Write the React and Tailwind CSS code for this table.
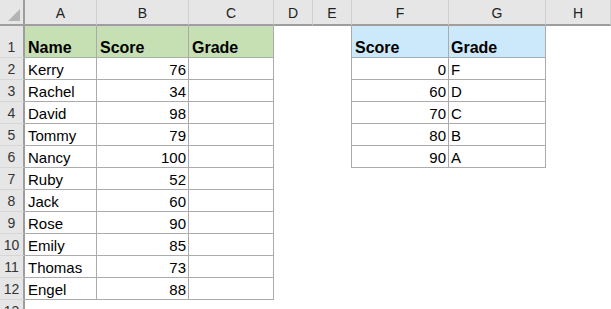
const cols = ['A', 'B', 'C', 'D', 'E', 'F', 'G', 'H']

const students = [
  ['Kerry', 76],
  ['Rachel', 34],
  ['David', 98],
  ['Tommy', 79],
  ['Nancy', 100],
  ['Ruby', 52],
  ['Jack', 60],
  ['Rose', 90],
  ['Emily', 85],
  ['Thomas', 73],
  ['Engel', 88],
]

const grades = [
  [0, 'F'],
  [60, 'D'],
  [70, 'C'],
  [80, 'B'],
  [90, 'A'],
]

const Cell = ({ className = '', children }) => (
  <div className={`box-border flex items-end overflow-hidden whitespace-nowrap pb-[1px] leading-[17px] ${className}`}>
    {children}
  </div>
)

const App = () => {
  const rows = Array.from({ length: 13 }, (_, i) => i + 1)

  return (
    <div
      className="w-[611px] h-[309px] overflow-hidden bg-white text-[15px] text-black"
      style={{ fontFamily: '"Liberation Sans", Arial, sans-serif' }}
    >
      <div className="grid grid-cols-[25px_72px_92px_85px_39px_39px_97px_97px_1fr] grid-rows-[26px_32px_repeat(12,22px)]">
        {/* Column headers */}
        <div className="relative box-border bg-[#e6e6e6] border-b-2 border-r-2 border-[#9e9e9e]">
          <div className="absolute right-[3px] bottom-[3px] w-0 h-0 border-l-[12px] border-l-transparent border-b-[12px] border-b-[#b4b4b4]" />
        </div>
        {cols.map((c) => (
          <div
            key={c}
            className="box-border flex items-center justify-center pt-[2px] bg-[#e6e6e6] border-b-2 border-b-[#9e9e9e] border-r border-r-[#d0d0d0] text-[14px] text-[#222]"
          >
            {c}
          </div>
        ))}

        {rows.map((r) => {
          const s = students[r - 2]
          const g = grades[r - 2]
          const inLeft = r <= 12
          const inRight = r <= 6
          const lb = 'border-[#ababab]'
          return [
            <div
              key={`h${r}`}
              className="box-border flex items-end justify-center pb-[1px] leading-[17px] bg-[#e6e6e6] border-r-2 border-r-[#9e9e9e] border-b border-b-[#d6d6d6] text-[14px] text-[#333]"
            >
              {r}
            </div>,
            // A
            <Cell
              key={`a${r}`}
              className={`pl-[3px] ${inLeft ? `border-r border-b ${lb}` : ''} ${r === 1 ? 'bg-[#c6e0b4] font-bold text-[16px]' : ''}`}
            >
              {r === 1 ? 'Name' : s ? s[0] : ''}
            </Cell>,
            // B
            <Cell
              key={`b${r}`}
              className={`${r === 1 ? 'pl-[3px] bg-[#c6e0b4] font-bold text-[16px]' : 'justify-end pr-[2px]'} ${inLeft ? `border-r border-b ${lb}` : ''}`}
            >
              {r === 1 ? 'Score' : s ? s[1] : ''}
            </Cell>,
            // C
            <Cell
              key={`c${r}`}
              className={`pl-[3px] ${inLeft ? `border-r border-b ${lb}` : ''} ${r === 1 ? 'bg-[#c6e0b4] font-bold text-[16px]' : ''}`}
            >
              {r === 1 ? 'Grade' : ''}
            </Cell>,
            <Cell key={`d${r}`} />,
            <Cell key={`e${r}`} className={inRight ? `border-r ${lb}` : ''} />,
            // F
            <Cell
              key={`f${r}`}
              className={`${r === 1 ? 'pl-[3px] bg-[#cce9fb] font-bold text-[16px]' : 'justify-end pr-[2px]'} ${inRight ? `border-r border-b ${lb}` : ''}`}
            >
              {r === 1 ? 'Score' : g ? g[0] : ''}
            </Cell>,
            // G
            <Cell
              key={`g${r}`}
              className={`pl-[2px] ${inRight ? `border-r border-b ${lb}` : ''} ${r === 1 ? 'bg-[#cce9fb] font-bold text-[16px]' : ''}`}
            >
              {r === 1 ? 'Grade' : g ? g[1] : ''}
            </Cell>,
            <Cell key={`hh${r}`} />,
          ]
        })}
      </div>
    </div>
  )
}

export default App
